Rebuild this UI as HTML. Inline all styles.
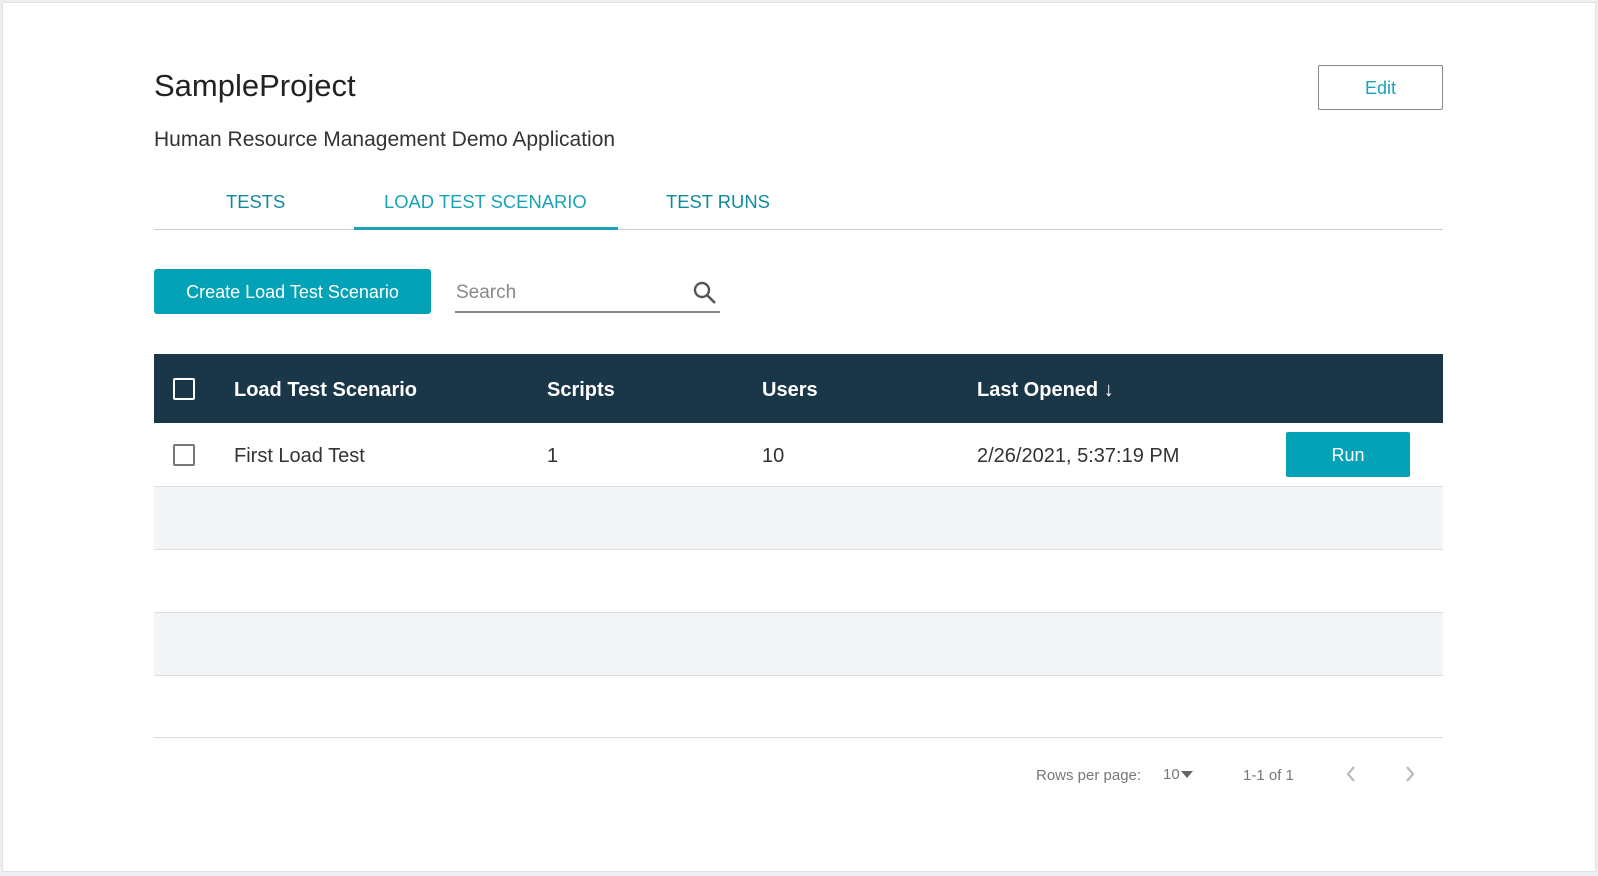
<!DOCTYPE html>
<html><head><style>
*{margin:0;padding:0;box-sizing:border-box}
body{width:1598px;height:876px;background:#eceff1;font-family:"Liberation Sans",sans-serif;position:relative;overflow:hidden;color:#222}
.card{position:absolute;left:2px;top:2px;width:1594px;height:870px;background:#fff;border:1px solid #e2e2e2}
.a{position:absolute;white-space:nowrap}
.row{position:absolute;left:154px;width:1289px;height:63px}
</style></head><body>
<div class="card"></div>
<div class="a" style="left:154px;top:68px;font-size:31px;color:#222">SampleProject</div>
<div class="a" style="left:1318px;top:65px;width:125px;height:45px;border:1px solid #888;border-radius:2px;color:#1aa3b8;font-size:18px;text-align:center;line-height:45px">Edit</div>
<div class="a" style="left:154px;top:128px;font-size:21px;color:#333">Human Resource Management Demo Application</div>
<div class="a" style="left:226px;top:191px;font-size:18.4px;color:#0f8a9e">TESTS</div>
<div class="a" style="left:384px;top:191px;font-size:18.4px;color:#1aa3b8">LOAD TEST SCENARIO</div>
<div class="a" style="left:666px;top:191px;font-size:18.4px;color:#0f8a9e">TEST RUNS</div>
<div class="a" style="left:154px;top:229px;width:1289px;height:1px;background:#ccc"></div>
<div class="a" style="left:354px;top:227px;width:264px;height:3px;background:#1aa3b8"></div>
<div class="a" style="left:154px;top:269px;width:277px;height:45px;background:#03a2b6;border-radius:3px;color:#fff;font-size:18px;text-align:center;line-height:47px">Create Load Test Scenario</div>
<div class="a" style="left:456px;top:282px;font-size:19px;color:#888">Search</div>
<svg class="a" style="left:692px;top:280px" width="26" height="26" viewBox="0 0 26 26"><circle cx="10" cy="10" r="7" fill="none" stroke="#555" stroke-width="2.4"/><path d="M15 15l8 8" stroke="#555" stroke-width="2.6"/></svg>
<div class="a" style="left:455px;top:311px;width:265px;height:1.5px;background:#888"></div>
<div class="a" style="left:154px;top:354px;width:1289px;height:69px;background:#1a3649"></div>
<div class="a" style="left:173px;top:378px;width:22px;height:22px;border:2px solid #fff;border-radius:2px"></div>
<div class="a" style="left:234px;top:379px;font-size:20px;font-weight:bold;color:#fff">Load Test Scenario</div>
<div class="a" style="left:547px;top:379px;font-size:20px;font-weight:bold;color:#fff">Scripts</div>
<div class="a" style="left:762px;top:379px;font-size:20px;font-weight:bold;color:#fff">Users</div>
<div class="a" style="left:977px;top:379px;font-size:20px;font-weight:bold;color:#fff">Last Opened ↓</div>
<div class="row" style="top:424px;border-bottom:1px solid #ddd"></div>
<div class="a" style="left:173px;top:444px;width:22px;height:22px;border:2px solid #777;border-radius:2px"></div>
<div class="a" style="left:234px;top:445px;font-size:20px;color:#333">First Load Test</div>
<div class="a" style="left:547px;top:445px;font-size:20px;color:#333">1</div>
<div class="a" style="left:762px;top:445px;font-size:20px;color:#333">10</div>
<div class="a" style="left:977px;top:445px;font-size:20px;color:#333">2/26/2021, 5:37:19 PM</div>
<div class="a" style="left:1286px;top:432px;width:124px;height:45px;background:#03a2b6;border-radius:2px;color:#fff;font-size:18px;text-align:center;line-height:47px">Run</div>
<div class="row" style="top:487px;background:#f4f5f6;border-bottom:1px solid #ddd"></div>
<div class="row" style="top:550px;border-bottom:1px solid #ddd"></div>
<div class="row" style="top:613px;background:#f4f5f6;border-bottom:1px solid #ddd"></div>
<div class="row" style="top:676px;border-bottom:1px solid #ddd;height:62px"></div>
<div class="a" style="left:1036px;top:767px;font-size:15px;color:#777">Rows per page:</div>
<div class="a" style="left:1163px;top:766px;font-size:15px;color:#777">10</div>
<svg class="a" style="left:1181px;top:771px" width="12" height="8"><path d="M0 0h12L6 7z" fill="#666"/></svg>
<div class="a" style="left:1243px;top:767px;font-size:15px;color:#777">1-1 of 1</div>
<svg class="a" style="left:1344px;top:765px" width="14" height="18"><path d="M10 2L4 9l6 7" fill="none" stroke="#bbb" stroke-width="2.2"/></svg>
<svg class="a" style="left:1403px;top:765px" width="14" height="18"><path d="M4 2l6 7-6 7" fill="none" stroke="#bbb" stroke-width="2.2"/></svg>
</body></html>
